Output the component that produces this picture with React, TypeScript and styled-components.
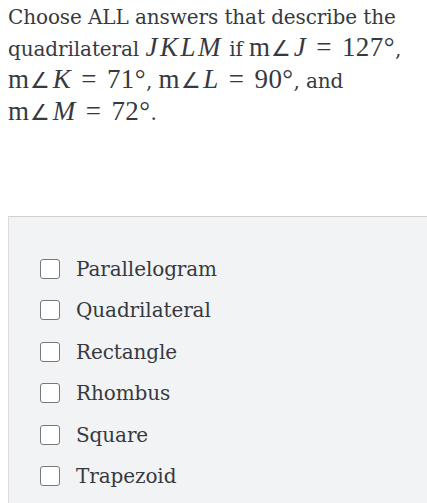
import React from "react";
import styled, { createGlobalStyle } from "styled-components";

const Global = createGlobalStyle`
  html, body { margin: 0; padding: 0; background: #ffffff; }
  body { overflow: hidden; }
`;

const Page = styled.div`
  width: 427px;
  height: 503px;
  display: flex;
  flex-direction: column;
  font-family: "DejaVu Serif", "Noto Serif", serif;
  color: #363a40;
`;

const Question = styled.p`
  margin: 0;
  padding: 1px 0 0 8px;
  font-size: 20px;
  line-height: 32px;
  letter-spacing: -0.1px;
`;

const Math = styled.span`
  font-family: "Liberation Serif", "Times New Roman", serif;
  font-size: 27px;
  line-height: 1;
  letter-spacing: 0.4px;
`;

const V = styled.i`
  font-style: italic;
  letter-spacing: 2.5px;
`;

const Angle = styled.span`
  font-size: 22px;
  margin: 0 2px 0 1px;
`;

const Op = styled.span`
  margin: 0 10px 0 8px;
`;

const Panel = styled.div`
  margin: 87px 0 0 8px;
  flex: 1;
  background: #f2f3f5;
  border-top: 1px solid #cfd0d2;
  border-left: 1px solid #dcdde0;
  padding: 40px 0 0 31px;
  display: flex;
  flex-direction: column;
  gap: 17.4px;
`;

const Option = styled.label`
  display: flex;
  align-items: center;
  gap: 16px;
  height: 24px;
  font-size: 20px;
  letter-spacing: -0.1px;
  color: #363a40;
`;

const Box = styled.span`
  width: 18px;
  height: 18px;
  border: 1.5px solid #76787c;
  border-radius: 3px;
  background: #ffffff;
  flex: none;
`;

const options = ["Parallelogram", "Quadrilateral", "Rectangle", "Rhombus", "Square", "Trapezoid"];

function Measure({ v, n }: { v: string; n: string }) {
  return (
    <Math>
      m<Angle>∠</Angle>
      <V>{v}</V>
      <Op>=</Op>
      {n}°
    </Math>
  );
}

export default function App() {
  return (
    <Page>
      <Global />
      <Question>
        Choose ALL answers that describe the
        <br />
        quadrilateral <Math><V>JKLM</V></Math> if <Measure v="J" n="127" />,
        <br />
        <Measure v="K" n="71" />, <Measure v="L" n="90" />, and
        <br />
        <Measure v="M" n="72" />.
      </Question>
      <Panel>
        {options.map((o) => (
          <Option key={o}>
            <Box />
            {o}
          </Option>
        ))}
      </Panel>
    </Page>
  );
}
